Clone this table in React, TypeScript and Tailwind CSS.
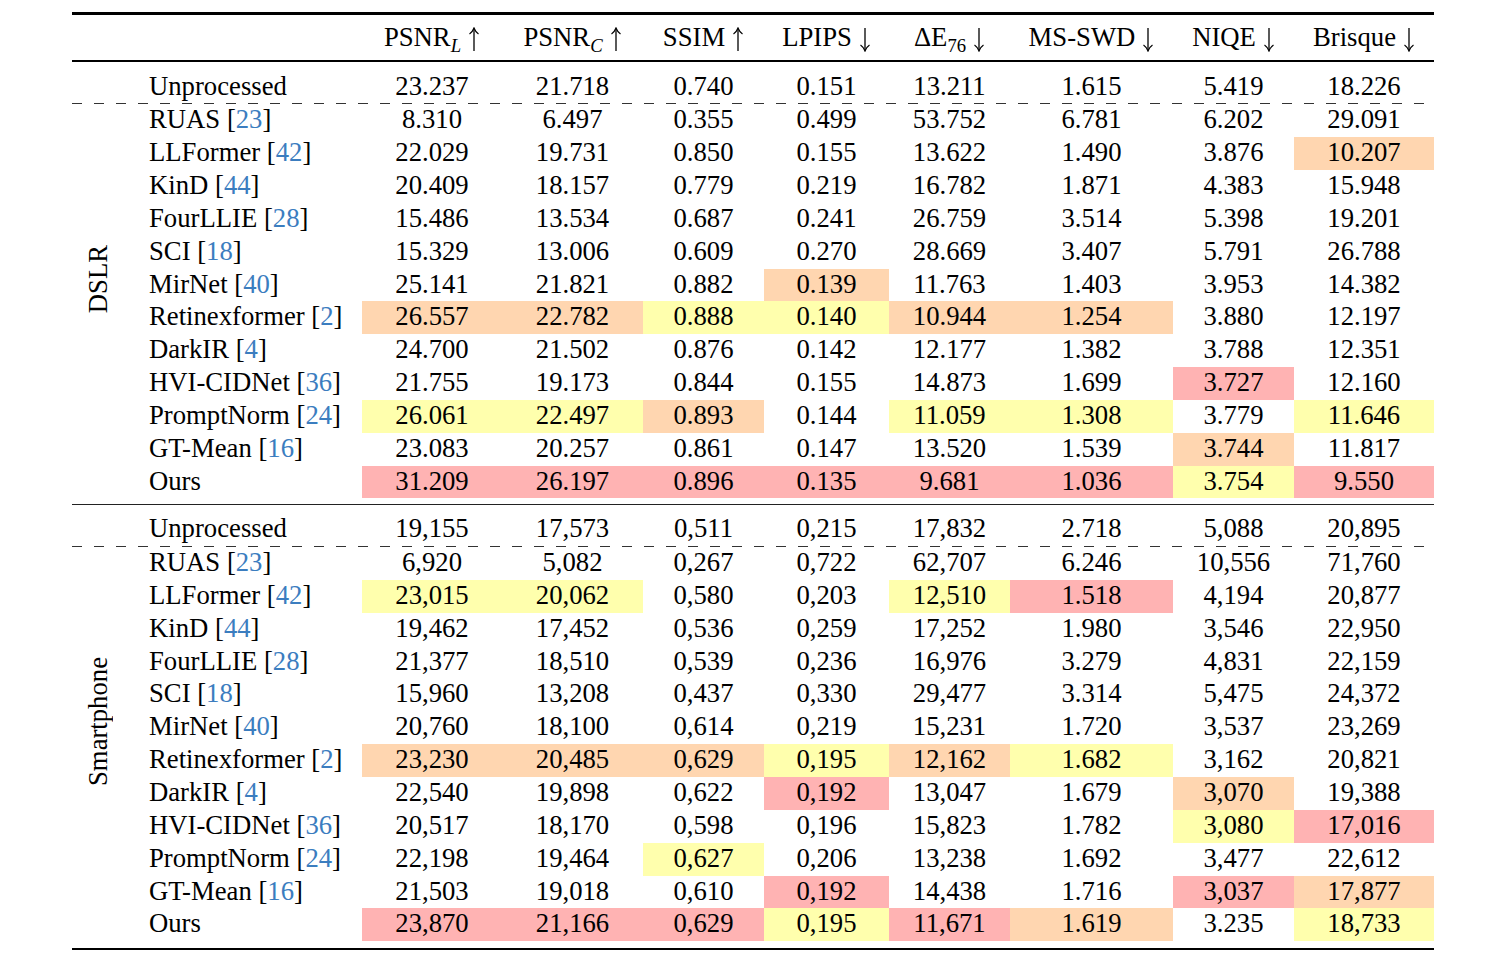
import React from "react";

type Section = {
  label: string;
  rows: [string, string | null, string[]][];
};

const HL: Record<string, string> = {
  r: "bg-[#ffb3b3]",
  o: "bg-[#ffd6b0]",
  y: "bg-[#ffffad]",
};

const cols = "grid grid-cols-[238px_140px_141px_121px_125px_121px_163px_121px_140px]";

const sections: Section[] = [
  {
    label: "DSLR",
    rows: [
      ["Unprocessed", null, ["23.237", "21.718", "0.740", "0.151", "13.211", "1.615", "5.419", "18.226"]],
      ["RUAS", "23", ["8.310", "6.497", "0.355", "0.499", "53.752", "6.781", "6.202", "29.091"]],
      ["LLFormer", "42", ["22.029", "19.731", "0.850", "0.155", "13.622", "1.490", "3.876", "10.207o"]],
      ["KinD", "44", ["20.409", "18.157", "0.779", "0.219", "16.782", "1.871", "4.383", "15.948"]],
      ["FourLLIE", "28", ["15.486", "13.534", "0.687", "0.241", "26.759", "3.514", "5.398", "19.201"]],
      ["SCI", "18", ["15.329", "13.006", "0.609", "0.270", "28.669", "3.407", "5.791", "26.788"]],
      ["MirNet", "40", ["25.141", "21.821", "0.882", "0.139o", "11.763", "1.403", "3.953", "14.382"]],
      ["Retinexformer", "2", ["26.557o", "22.782o", "0.888y", "0.140y", "10.944o", "1.254o", "3.880", "12.197"]],
      ["DarkIR", "4", ["24.700", "21.502", "0.876", "0.142", "12.177", "1.382", "3.788", "12.351"]],
      ["HVI-CIDNet", "36", ["21.755", "19.173", "0.844", "0.155", "14.873", "1.699", "3.727r", "12.160"]],
      ["PromptNorm", "24", ["26.061y", "22.497y", "0.893o", "0.144", "11.059y", "1.308y", "3.779", "11.646y"]],
      ["GT-Mean", "16", ["23.083", "20.257", "0.861", "0.147", "13.520", "1.539", "3.744o", "11.817"]],
      ["Ours", null, ["31.209r", "26.197r", "0.896r", "0.135r", "9.681r", "1.036r", "3.754y", "9.550r"]],
    ],
  },
  {
    label: "Smartphone",
    rows: [
      ["Unprocessed", null, ["19,155", "17,573", "0,511", "0,215", "17,832", "2.718", "5,088", "20,895"]],
      ["RUAS", "23", ["6,920", "5,082", "0,267", "0,722", "62,707", "6.246", "10,556", "71,760"]],
      ["LLFormer", "42", ["23,015y", "20,062y", "0,580", "0,203", "12,510y", "1.518r", "4,194", "20,877"]],
      ["KinD", "44", ["19,462", "17,452", "0,536", "0,259", "17,252", "1.980", "3,546", "22,950"]],
      ["FourLLIE", "28", ["21,377", "18,510", "0,539", "0,236", "16,976", "3.279", "4,831", "22,159"]],
      ["SCI", "18", ["15,960", "13,208", "0,437", "0,330", "29,477", "3.314", "5,475", "24,372"]],
      ["MirNet", "40", ["20,760", "18,100", "0,614", "0,219", "15,231", "1.720", "3,537", "23,269"]],
      ["Retinexformer", "2", ["23,230o", "20,485o", "0,629o", "0,195y", "12,162o", "1.682y", "3,162", "20,821"]],
      ["DarkIR", "4", ["22,540", "19,898", "0,622", "0,192r", "13,047", "1.679", "3,070o", "19,388"]],
      ["HVI-CIDNet", "36", ["20,517", "18,170", "0,598", "0,196", "15,823", "1.782", "3,080y", "17,016r"]],
      ["PromptNorm", "24", ["22,198", "19,464", "0,627y", "0,206", "13,238", "1.692", "3,477", "22,612"]],
      ["GT-Mean", "16", ["21,503", "19,018", "0,610", "0,192r", "14,438", "1.716", "3,037r", "17,877o"]],
      ["Ours", null, ["23,870r", "21,166r", "0,629r", "0,195y", "11,671r", "1.619o", "3.235", "18,733y"]],
    ],
  },
];

// thin LaTeX-style arrow
function Arrow({ up }: { up?: boolean }) {
  return (
    <svg width="12" height="25" viewBox="0 0 12 25" className={`inline-block ml-[7px] align-[-6px] ${up ? "" : "rotate-180"}`}>
      <path d="M6 1.5 V24" stroke="black" strokeWidth="1.3" fill="none" />
      <path d="M1.5 7 Q4.5 5 6 1 Q7.5 5 10.5 7" stroke="black" strokeWidth="1.2" fill="none" />
    </svg>
  );
}

function Row({ name, cite, vals }: { name: string; cite: string | null; vals: string[] }) {
  return (
    <div className={`${cols} h-[32.85px]`}>
      <div className="pl-[25px] leading-[31px] whitespace-nowrap">
        {name}
        {cite && (
          <>
            {" "}[<span className="text-[#3b7dbf]">{cite}</span>]
          </>
        )}
      </div>
      {vals.map((v, i) => {
        const hl = HL[v.slice(-1)];
        const text = hl ? v.slice(0, -1) : v;
        return (
          <div key={i} className={`text-center leading-[31px] ${hl ?? ""}`}>
            {text}
          </div>
        );
      })}
    </div>
  );
}

function Group({ section, top }: { section: Section; top: string }) {
  const [first, ...rest] = section.rows;
  return (
    <div className={`flex ${top}`}>
      <div className="w-[52px] flex items-center justify-center pb-[11px]">
        <span className="[writing-mode:vertical-rl] rotate-180 leading-[27px]">{section.label}</span>
      </div>
      <div className="flex flex-col w-[1310px]">
        <Row name={first[0]} cite={first[1]} vals={first[2]} />
        <div className="-ml-[52px] h-px bg-[repeating-linear-gradient(to_right,#333_0_10px,transparent_10px_22px)]" />
        {rest.map((r) => (
          <Row key={r[0]} name={r[0]} cite={r[1]} vals={r[2]} />
        ))}
      </div>
    </div>
  );
}

export default function App() {
  const sub = "relative top-[6px] text-[18.7px] leading-none";
  return (
    <div className="min-h-screen bg-white text-black font-['Liberation_Serif',serif] text-[26.7px]">
      <div className="pl-[72px] pt-[12px]">
        <div className="w-[1362px]">
          <div className="h-[2.5px] bg-black" />
          <div className="grid grid-cols-[290px_140px_141px_121px_125px_121px_163px_121px_140px] h-[45.5px] pt-[9.3px] leading-[27px] whitespace-nowrap">
            <div />
            <div className="text-center">
              PSNR<span className={`${sub} italic`}>L</span>
              <Arrow up />
            </div>
            <div className="text-center">
              PSNR<span className={`${sub} italic`}>C</span>
              <Arrow up />
            </div>
            <div className="text-center">
              SSIM
              <Arrow up />
            </div>
            <div className="text-center">
              LPIPS
              <Arrow />
            </div>
            <div className="text-center">
              ΔE<span className={`${sub} text-[17px] top-[4px]`}>76</span>
              <Arrow />
            </div>
            <div className="text-center">
              MS-SWD
              <Arrow />
            </div>
            <div className="text-center">
              NIQE
              <Arrow />
            </div>
            <div className="text-center">
              Brisque
              <Arrow />
            </div>
          </div>
          <div className="h-[1.5px] bg-black" />
          <Group section={sections[0]} top="pt-[9px]" />
          <div className="mt-[5.3px] h-[1.5px] bg-[#222]" />
          <Group section={sections[1]} top="pt-[8px]" />
          <div className="mt-[6.6px] h-[2.5px] bg-black" />
        </div>
      </div>
    </div>
  );
}
